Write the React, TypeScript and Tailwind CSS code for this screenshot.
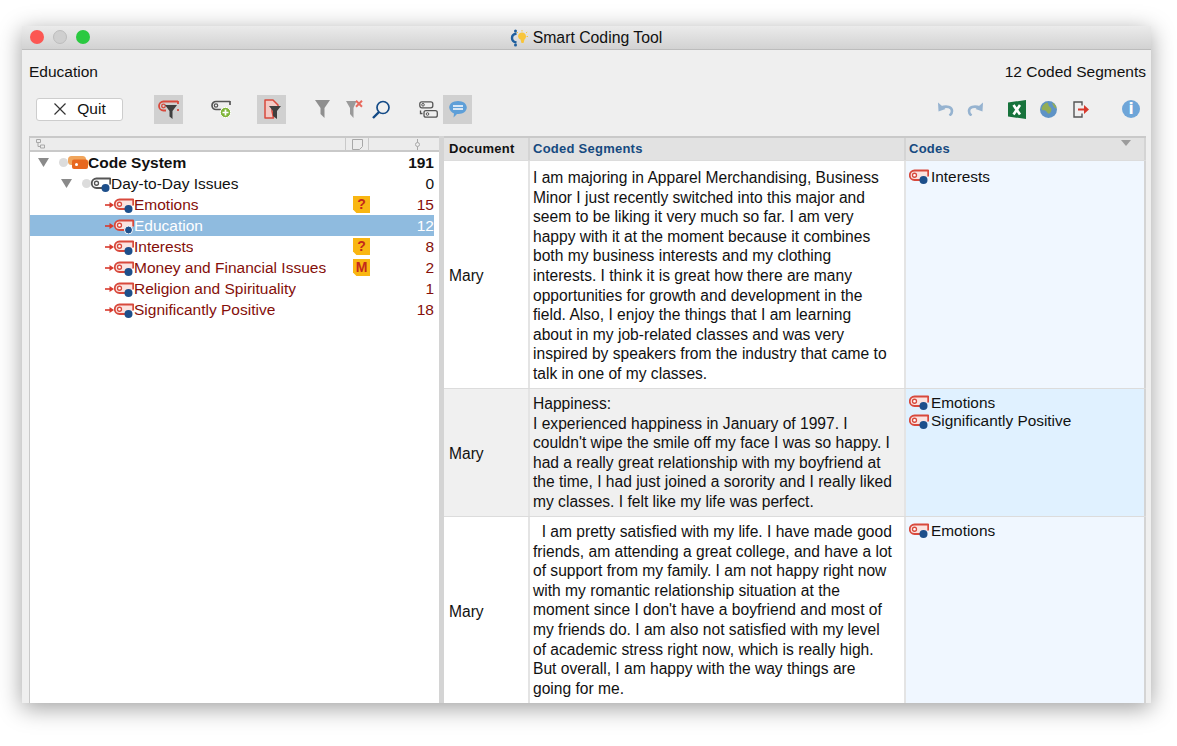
import React from 'react';

const sans = '[font-family:"Liberation_Sans",Arial,sans-serif]';

const CodeTag: React.FC<{ color?: string; fill?: string; dot?: string; ring?: boolean }> = ({
    color = '#d8493c',
    fill = '#fbe3e0',
    dot = '#1d4f8b',
    ring = false,
}) => (
    <svg width="20" height="16" viewBox="0 0 20 16" className="shrink-0">
        <path d="M5.5 2.500h13.500v6.500h-5l-3 3H5.500a4.750 4.750 0 0 1 0-9.500z" fill={fill} />
        <path d="M19.200 2.500H5.500a4.750 4.750 0 0 0 0 9.500H11M19.200 1.700V8.500" fill="none" stroke={color} strokeWidth="1.800" />
        <circle cx="5.500" cy="7.250" r="2" fill="#fff" stroke={color} strokeWidth="1.300" />
        <circle cx="14.500" cy="12" r="4" fill={dot} stroke={ring ? '#fff' : 'none'} strokeWidth="1" />
    </svg>
);

const Triangle: React.FC = () => (
    <svg width="11" height="9" viewBox="0 0 11 9" className="block">
        <path d="M0 0h11L5.500 9z" fill="#8a8a8a" />
    </svg>
);

const Arrow: React.FC = () => (
    <svg width="9" height="8" viewBox="0 0 9 8" className="shrink-0">
        <path d="M0 4h6" stroke="#d8392c" strokeWidth="1.600" />
        <path d="M4.500 1 9 4 4.500 7z" fill="#d8392c" />
    </svg>
);

const Memo: React.FC<{ letter: string }> = ({ letter }) => (
    <div className="w-[17px] h-[17px] bg-[#f9b612] flex items-center justify-center text-[14px] font-bold text-[#c4281c] [clip-path:polygon(0_0,100%_0,100%_100%,20%_100%,0_80%)]">
        {letter}
    </div>
);

const Toggle: React.FC<{ children: React.ReactNode; ml: string }> = ({ children, ml }) => (
    <div className={`w-[29px] h-[29px] bg-[#d0d0d0] flex items-center justify-center ${ml}`}>{children}</div>
);

const tree = [
    { name: 'Emotions', count: 15, memo: '?' },
    { name: 'Education', count: 12, selected: true },
    { name: 'Interests', count: 8, memo: '?' },
    { name: 'Money and Financial Issues', count: 2, memo: 'M' },
    { name: 'Religion and Spirituality', count: 1 },
    { name: 'Significantly Positive', count: 18 },
];

const segments = [
    {
        bg: 'bg-white',
        codesBg: 'bg-[#f0f7ff]',
        height: 'h-[228px]',
        pad: 'pt-[7px]',
        codesPad: 'pt-[6px]',
        codes: ['Interests'],
        lines: [
            'I am majoring in Apparel Merchandising, Business',
            'Minor I just recently switched into this major and',
            'seem to be liking it very much so far. I am very',
            'happy with it at the moment because it combines',
            'both my business interests and my clothing',
            'interests. I think it is great how there are many',
            'opportunities for growth and development in the',
            'field. Also, I enjoy the things that I am learning',
            'about in my job-related classes and was very',
            'inspired by speakers from the industry that came to',
            'talk in one of my classes.',
        ],
    },
    {
        bg: 'bg-[#f0f0f0]',
        codesBg: 'bg-[#e0f1ff]',
        height: 'h-[128px]',
        pad: 'pt-[5px]',
        codesPad: 'pt-[4px]',
        codes: ['Emotions', 'Significantly Positive'],
        lines: [
            'Happiness:',
            'I experienced happiness in January of 1997. I',
            "couldn't wipe the smile off my face I was so happy. I",
            'had a really great relationship with my boyfriend at',
            'the time, I had just joined a sorority and I really liked',
            'my classes. I felt like my life was perfect.',
        ],
    },
    {
        bg: 'bg-white',
        codesBg: 'bg-[#f0f7ff]',
        height: 'flex-1',
        pad: 'pt-[5px]',
        codesPad: 'pt-[4px]',
        codes: ['Emotions'],
        lines: [
            '\u00a0 I am pretty satisfied with my life. I have made good',
            'friends, am attending a great college, and have a lot',
            'of support from my family. I am not happy right now',
            'with my romantic relationship situation at the',
            "moment since I don't have a boyfriend and most of",
            'my friends do. I am also not satisfied with my level',
            'of academic stress right now, which is really high.',
            'But overall, I am happy with the way things are',
            'going for me.',
        ],
    },
];

const App: React.FC = () => {
    return (
        <div className={`h-[746px] overflow-hidden bg-white pt-[26px] pl-[22px] text-[15.5px] text-[#111] ${sans}`}>
            <div className="w-[1129px] h-[677px] flex flex-col bg-[#efefef] shadow-[0_5px_22px_rgba(0,0,0,0.38)]">
                {/* title bar */}
                <div className="relative h-[24px] shrink-0 flex items-center justify-center gap-[5px] bg-gradient-to-b from-[#ebebeb] to-[#d2d2d2] border-b border-[#bcbcbc]">
                    <div className="absolute left-[8px] top-[4px] flex gap-[9px]">
                        <div className="w-[14px] h-[14px] rounded-full bg-[#fc5753]" />
                        <div className="w-[14px] h-[14px] rounded-full bg-[#cfcfcf] border border-[#bdbdbd]" />
                        <div className="w-[14px] h-[14px] rounded-full bg-[#2ac940]" />
                    </div>
                    <svg width="18" height="18" viewBox="0 0 18 18" className="-ml-[1px]">
                        <path d="M6.500 4.500C3.500 5 2 7 2 9s1.500 4 4.500 4.500" fill="none" stroke="#1f5f9e" strokeWidth="2.400" />
                        <circle cx="5.500" cy="2" r="1.500" fill="#1f5f9e" />
                        <circle cx="5.500" cy="16" r="1.500" fill="#1f5f9e" />
                        <path d="M8 7.500a4 4 0 1 1 6.500 3.100L13.500 14h-2l-1-3.400A4 4 0 0 1 8 7.500z" fill="#f8c53a" />
                        <path d="M12 1v1.500M6.800 3 8 4M17.200 3 16 4M18 7.500h-1.500" stroke="#f8c53a" strokeWidth="1" />
                    </svg>
                    <span className="text-[15.8px] leading-none">Smart Coding Tool</span>
                </div>

                {/* heading */}
                <div className="h-[43px] shrink-0 flex items-center justify-between pl-[7px] pr-[5px]">
                    <span>Education</span>
                    <span>12 Coded Segments</span>
                </div>

                {/* toolbar */}
                <div className="h-[30px] mt-[1px] shrink-0 flex items-center pr-[11px]">
                    <button className="ml-[14px] w-[87px] h-[23px] pl-[1px] bg-white border border-[#cdcdcd] rounded-[3px] flex items-center justify-center gap-[11px]">
                        <svg width="12" height="12" viewBox="0 0 12 12">
                            <path d="M.5.500l11 11M11.500.500l-11 11" stroke="#333" strokeWidth="1.200" />
                        </svg>
                        <span className="-mt-[1px]">Quit</span>
                    </button>
                    <Toggle ml="ml-[31px]">
                        <svg width="21" height="19" viewBox="0 0 21 19">
                            <path d="M20 1.500H5.500a4.500 4.500 0 0 0 0 9H8M20 1v3M20 9v2" fill="none" stroke="#d8493c" strokeWidth="1.800" />
                            <circle cx="5.500" cy="6" r="1.800" fill="none" stroke="#d8493c" strokeWidth="1.300" />
                            <path d="M7 5h12l-4.500 6v8L11.500 16.500V11z" fill="#3f3f3f" />
                        </svg>
                    </Toggle>
                    <div className="ml-[23px] w-[29px] flex justify-center">
                        <svg width="20" height="18" viewBox="0 0 20 18">
                            <path d="M19 1.500H5a4 4 0 0 0 0 8h5M19 1v4" fill="none" stroke="#555" strokeWidth="1.700" />
                            <circle cx="5" cy="5.500" r="1.700" fill="none" stroke="#555" strokeWidth="1.200" />
                            <circle cx="14.500" cy="12.500" r="5.200" fill="#7fb539" stroke="#fff" />
                            <path d="M14.500 9.500v6M11.500 12.500h6" stroke="#fff" strokeWidth="1.700" />
                        </svg>
                    </div>
                    <Toggle ml="ml-[22px]">
                        <svg width="17" height="20" viewBox="0 0 17 20" className="ml-[1px]">
                            <path d="M1 1h8l5 5v2H8v4l1.500 7H1z" fill="#f3c9c4" stroke="#d8493c" strokeWidth="1.500" strokeLinejoin="round" />
                            <path d="M5 7h12l-4 5v8l-4-3v-5z" fill="#3f3f3f" />
                        </svg>
                    </Toggle>
                    <div className="ml-[29px] w-[15px]">
                        <svg width="15" height="18" viewBox="0 0 15 18" className="block">
                            <path d="M0 0h15L9.500 8v10L5.500 14V8z" fill="#8f8f8f" />
                        </svg>
                    </div>
                    <div className="ml-[16px] w-[18px]">
                        <svg width="18" height="18" viewBox="0 0 18 18" className="block">
                            <path d="M0 1h10.500L7.500 8v10L4 14V8z" fill="#9a9a9a" />
                            <path d="M10 .8l6 6M16 .8l-6 6" stroke="#e86a5e" strokeWidth="2" />
                        </svg>
                    </div>
                    <div className="ml-[8px] w-[18px]">
                        <svg width="18" height="19" viewBox="0 0 18 19" className="block">
                            <circle cx="11" cy="7.500" r="6" fill="none" stroke="#134a86" strokeWidth="1.700" />
                            <path d="M7 12l-6 6" stroke="#134a86" strokeWidth="2.400" />
                        </svg>
                    </div>
                    <div className="ml-[29px] w-[18px]">
                        <svg width="19" height="17" viewBox="0 0 19 17" className="block">
                            <rect x="0.800" y="0.800" width="13" height="6" rx="2" fill="none" stroke="#555" strokeWidth="1.300" />
                            <circle cx="4" cy="3.800" r="1.300" fill="none" stroke="#555" />
                            <path d="M1.500 9.500v3h2" fill="none" stroke="#555" strokeWidth="1.300" />
                            <rect x="5" y="9.700" width="13.300" height="6.500" rx="2" fill="none" stroke="#555" strokeWidth="1.300" />
                            <circle cx="8.500" cy="13" r="1.300" fill="none" stroke="#555" />
                        </svg>
                    </div>
                    <Toggle ml="ml-[6px]">
                        <svg width="18" height="17" viewBox="0 0 18 17" className="mt-[1px]">
                            <path d="M9 0c5 0 8.800 2.800 8.800 6.500S14 13 9.500 13H8l-3.500 3.500.5-4C2.500 11.300.2 9 .2 6.500.2 2.800 4 0 9 0z" fill="#5e9fd8" />
                            <path d="M4 5h10M4 8h10" stroke="#fff" strokeWidth="1.400" />
                        </svg>
                    </Toggle>
                    <div className="ml-auto w-[17px]">
                        <svg width="17" height="14" viewBox="0 0 17 14" className="block">
                            <path d="M4 5.500c6-2 11-.5 11 3.500 0 2-1 3.500-2.500 4.500" fill="none" stroke="#96b3d0" strokeWidth="2.600" />
                            <path d="M1 .5l.5 9 7-2.500z" fill="#96b3d0" />
                        </svg>
                    </div>
                    <div className="ml-[13px] w-[17px]">
                        <svg width="17" height="14" viewBox="0 0 17 14" className="block">
                            <path d="M13 5.500c-6-2-11-.5-11 3.500 0 2 1 3.500 2.500 4.500" fill="none" stroke="#96b3d0" strokeWidth="2.600" />
                            <path d="M16 .5l-.5 9-7-2.500z" fill="#96b3d0" />
                        </svg>
                    </div>
                    <div className="ml-[24px] w-[18px]">
                        <svg width="18" height="19" viewBox="0 0 18 19" className="block">
                            <path d="M0 2.500 18 0v19L0 16.500z" fill="#17733c" />
                            <path d="M5.500 5l6.500 9.500M12 5l-6.500 9.500" stroke="#fff" strokeWidth="2.600" />
                        </svg>
                    </div>
                    <div className="ml-[14px] w-[17px]">
                        <svg width="17" height="17" viewBox="0 0 17 17" className="block">
                            <circle cx="8.500" cy="8.500" r="8.500" fill="#5e93c6" />
                            <path d="M1.500 8c.5-3 3-6 6-6.500 1.500 2 .5 3.500 2.500 4.500s2 3.500 0 6c-2 2-3-1-4-2S3 10.500 1.500 8zM12 1.500c2.500 1 4.500 3.500 4.500 6-2 0-3.500-2.500-4.500-6z" fill="#93ad55" />
                        </svg>
                    </div>
                    <div className="ml-[16px] w-[16px]">
                        <svg width="16" height="17" viewBox="0 0 16 17" className="block">
                            <path d="M9 4.500V1H1v15h8v-3.500" fill="none" stroke="#555" strokeWidth="1.400" />
                            <path d="M5 7.500h6V4l5 4.500-5 4.500V9.500H5z" fill="#d8392c" />
                        </svg>
                    </div>
                    <div className="ml-[33px] w-[18px] h-[18px] rounded-full bg-[#6ea5d8] text-white text-[15px] font-bold leading-[18px] text-center [font-family:'DejaVu_Sans',sans-serif]">
                        i
                    </div>
                </div>

                {/* panes */}
                <div className="mt-[12px] flex-1 min-h-0 flex pl-[7px] pr-[5px]">
                    {/* code tree */}
                    <div className="w-[410px] bg-white flex flex-col border-l border-[#c9c9c9]">
                        <div className="h-[16px] shrink-0 flex bg-[#ececec] border-y-2 border-[#c9c9c9]">
                            <div className="flex-1 pl-[6px] flex items-center">
                                <svg width="9" height="10" viewBox="0 0 9 10">
                                    <path d="M.5.500h4v3h-4zM4.500 6h4v3h-4zM2 3.500v4h2.500" fill="none" stroke="#a8a8a8" />
                                </svg>
                            </div>
                            <div className="w-[24px] border-x border-[#c9c9c9] flex items-center justify-center">
                                <svg width="11" height="11" viewBox="0 0 11 11">
                                    <path d="M.5.500h10v7l-3 3h-7z" fill="none" stroke="#a8a8a8" />
                                </svg>
                            </div>
                            <div className="w-[70px] flex items-center justify-end pr-[18px]">
                                <svg width="7" height="11" viewBox="0 0 7 11">
                                    <circle cx="3.500" cy="5.500" r="2" fill="none" stroke="#a8a8a8" />
                                    <path d="M3.500 0v3.500M3.500 7.500V11" stroke="#a8a8a8" />
                                </svg>
                            </div>
                        </div>
                        <div className="pr-[5px]">
                            <div className="h-[21px] flex items-center font-bold">
                                <div className="ml-[8px] w-[21px]">
                                    <Triangle />
                                </div>
                                <div className="w-[9px] h-[9px] rounded-full bg-[#dcdcdc] shrink-0" />
                                <svg width="20" height="13" viewBox="0 0 20 13" className="shrink-0">
                                    <rect x="0" y="0" width="18" height="9" rx="3.500" fill="#f0a55c" />
                                    <rect x="4" y="3.500" width="16" height="9.500" rx="2" fill="#e8681e" />
                                    <circle cx="8.500" cy="8.500" r="1.500" fill="#fff" />
                                </svg>
                                <span>Code System</span>
                                <span className="ml-auto">191</span>
                            </div>
                            <div className="h-[21px] flex items-center">
                                <div className="ml-[31px] w-[21px]">
                                    <Triangle />
                                </div>
                                <div className="w-[9px] h-[9px] rounded-full bg-[#dcdcdc] shrink-0" />
                                <CodeTag color="#555" fill="#fff" />
                                <span>Day-to-Day Issues</span>
                                <span className="ml-auto">0</span>
                            </div>
                            {tree.map((item) => (
                                <div
                                    key={item.name}
                                    className={`h-[21px] flex items-center pl-[75px] ${
                                        item.selected ? 'bg-[#8fbbdf] text-white' : 'text-[#850f0a]'
                                    }`}
                                >
                                    <Arrow />
                                    <CodeTag ring={item.selected} />
                                    <span className="truncate">{item.name}</span>
                                    <div className="ml-auto flex items-center">
                                        {item.memo && <Memo letter={item.memo} />}
                                        <span className="w-[64px] text-right">{item.count}</span>
                                    </div>
                                </div>
                            ))}
                        </div>
                    </div>

                    <div className="w-[5px] bg-[#d4d4d4]" />

                    {/* coded segments table */}
                    <div className="flex-1 flex flex-col bg-white min-w-0">
                        <div className="h-[24px] shrink-0 flex bg-[#e2e2e2] border-t-2 border-[#c9c9c9] text-[13px] font-bold tracking-[0.25px]">
                            <div className="w-[84px] pl-[5px] pt-[1px]">Document</div>
                            <div className="w-[376px] pl-[3px] pt-[1px] border-l-2 border-[#d4d4d4] text-[#164a80]">Coded Segments</div>
                            <div className="relative flex-1 pl-[3px] pt-[1px] border-x-2 border-[#d4d4d4] text-[#164a80]">
                                Codes
                                <svg width="10" height="6" viewBox="0 0 10 6" className="absolute right-[13px] top-[2px]">
                                    <path d="M0 0h10L5 6z" fill="#9c9c9c" />
                                </svg>
                            </div>
                        </div>
                        {segments.map((seg, i) => (
                            <div key={i} className={`flex min-h-0 ${seg.height} ${seg.bg} border-t border-[#dcdcdc] text-[15.6px]`}>
                                <div className="w-[84px] shrink-0 pl-[5px] pt-[3px] flex items-center">Mary</div>
                                <div className={`w-[376px] shrink-0 pl-[3px] border-l-2 border-[#e4e4e4] leading-[19.6px] whitespace-nowrap ${seg.pad}`}>
                                    {seg.lines.map((line, j) => (
                                        <div key={j}>{line}</div>
                                    ))}
                                </div>
                                <div className={`flex-1 pl-[3px] border-l-2 border-[#e4e4e4] ${seg.codesBg} ${seg.codesPad}`}>
                                    {seg.codes.map((code) => (
                                        <div key={code} className="h-[18.5px] flex items-center">
                                            <CodeTag />
                                            <span className="ml-[2px] text-[15.4px]">{code}</span>
                                        </div>
                                    ))}
                                </div>
                                <div className="w-[2px] bg-[#d4d4d4]" />
                            </div>
                        ))}
                    </div>
                </div>
            </div>
        </div>
    );
};

export default App;
